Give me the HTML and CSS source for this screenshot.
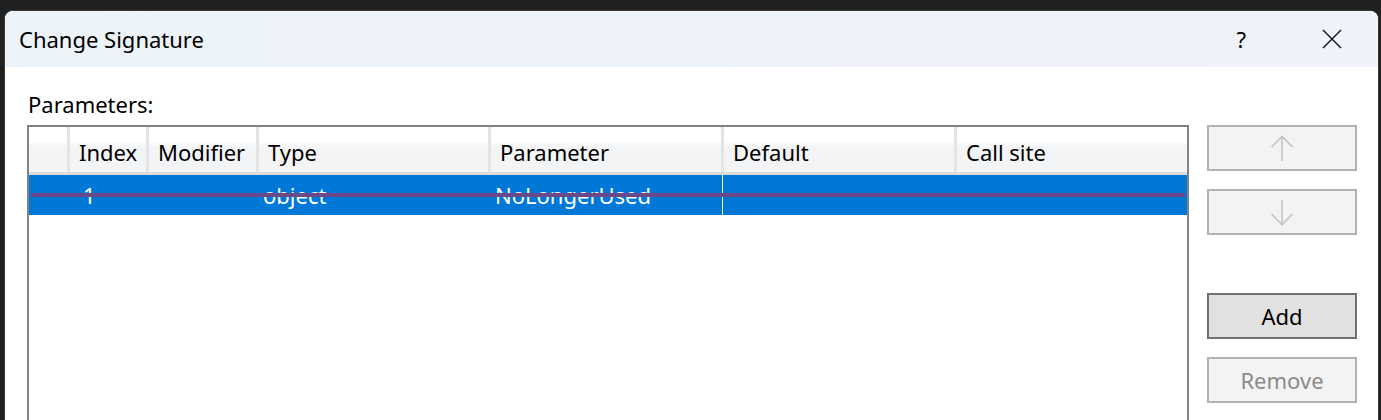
FILE: index.html
```html
<!DOCTYPE html>
<html>
<head>
<meta charset="utf-8">
<link rel="stylesheet" href="styles.css">
</head>
<body>
<div class="window">
  <div class="titlebar">
    <span class="title">Change Signature</span>
    <span class="help">?</span>
    <svg class="close" width="20" height="20" viewBox="0 0 20 20"><path d="M1 1 L19 19 M19 1 L1 19" stroke="#1b1b1b" stroke-width="1.5" fill="none"/></svg>
  </div>
  <div class="content">
    <div class="label">Parameters:</div>
    <div class="table">
      <div class="grid head">
        <div class="hc"></div>
        <div class="hc">Index</div>
        <div class="hc">Modifier</div>
        <div class="hc">Type</div>
        <div class="hc">Parameter</div>
        <div class="hc">Default</div>
        <div class="hc last">Call site</div>
      </div>
      <div class="grid row selected">
        <div class="rc"></div>
        <div class="rc idx">1</div>
        <div class="rc"></div>
        <div class="rc">object</div>
        <div class="rc">NoLongerUsed</div>
        <div class="rc edit"></div>
        <div class="rc"></div>
        <div class="strike"></div>
      </div>
    </div>
    <div class="buttons">
      <div class="btn disabled arrow">
        <svg width="24" height="27" viewBox="0 0 24 27"><path d="M12 1.5 V26 M1.5 12 L12 1.5 L22.5 12" stroke="#c3c3c3" stroke-width="1.6" fill="none"/></svg>
      </div>
      <div class="btn disabled arrow">
        <svg width="24" height="27" viewBox="0 0 24 27"><path d="M12 1 V25.5 M1.5 15 L12 25.5 L22.5 15" stroke="#c3c3c3" stroke-width="1.6" fill="none"/></svg>
      </div>
      <div class="btn primary add">Add</div>
      <div class="btn disabled text">Remove</div>
    </div>
  </div>
</div>
</body>
</html>
```
FILE: styles.css
```css
html, body {
  margin: 0;
  padding: 0;
  height: 100%;
  overflow: hidden;
}
body {
  background: #202020;
  font-family: "Noto Sans", "Open Sans", sans-serif;
  font-size: 22px;
  color: #000;
}
.window {
  margin: 10px 0 0 4px;
  width: 1373px;
  height: 420px;
  border: 1px solid #383838;
  border-bottom: none;
  border-radius: 9px 9px 0 0;
  background: #fff;
  overflow: hidden;
}
.titlebar {
  height: 56px;
  display: flex;
  align-items: center;
  background: linear-gradient(to right, #ecf3f8, #f0f3f9);
  padding-left: 14px;
}
.title {
  flex: 1;
}
.help {
  margin-right: 76px;
}
.close {
  margin-right: 36px;
}
.content {
  display: grid;
  grid-template-columns: 1162px 150px;
  grid-template-rows: auto 1fr;
  column-gap: 18px;
  row-gap: 6px;
  padding: 22px 21px 0 22px;
}
.label {
  grid-column: 1;
  line-height: 30px;
  padding-left: 1px;
}
.table {
  grid-column: 1;
  grid-row: 2;
  height: 320px;
  border: 2px solid #828282;
}
.grid {
  display: grid;
  grid-template-columns: 41px 79px 110px 232px 233px 233px 230px;
}
.head {
  height: 48px;
  border-bottom: 3px solid #dcdcdc;
  box-sizing: border-box;
  background: linear-gradient(#ffffff 0, #ffffff 30%, #f3f4f6 45%, #f3f4f6 100%);
}
.hc {
  border-right: 3px solid #e3e4e6;
  padding: 5px 0 0 9px;
  display: flex;
  align-items: center;
  white-space: nowrap;
}
.hc.last {
  border-right: none;
}
.row {
  position: relative;
  height: 40px;
}
.selected {
  background: #0078d7;
  color: #fff;
}
.rc {
  display: flex;
  align-items: center;
  padding-left: 4px;
  white-space: nowrap;
}
.rc.idx {
  padding-left: 13px;
}
.rc.edit {
  border-left: 1px solid #ffffff;
  margin-left: -2px;
}
.strike {
  position: absolute;
  left: 2px;
  right: 2px;
  top: 18px;
  height: 4px;
  background: #6b4a8c;
}
.buttons {
  grid-column: 2;
  grid-row: 2;
  display: flex;
  flex-direction: column;
}
.btn {
  height: 46px;
  box-sizing: border-box;
  border: 2px solid #b0b3b6;
  background: #f3f3f3;
  display: flex;
  align-items: center;
  justify-content: center;
  margin-bottom: 18px;
}
.btn.add {
  margin-top: 40px;
}
.btn.primary {
  border-color: #707070;
  background: #e1e1e1;
  color: #000;
}
.btn.text {
  color: #8b8b8b;
}
```
